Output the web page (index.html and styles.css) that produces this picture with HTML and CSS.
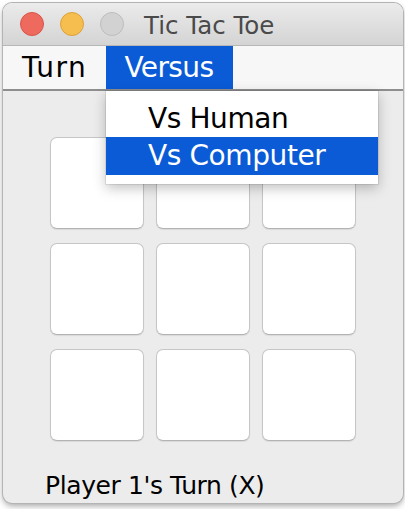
FILE: index.html
```html
<!DOCTYPE html>
<html>
<head>
<meta charset="utf-8">
<link rel="stylesheet" href="styles.css">
</head>
<body>
<div class="backdrop">
  <div class="window">
    <div class="titlebar">
      <div class="lights">
        <span class="light red"></span>
        <span class="light yellow"></span>
        <span class="light gray"></span>
      </div>
      <div class="title">Tic Tac Toe</div>
    </div>
    <div class="menubar">
      <div class="menu-item turn">Turn</div>
      <div class="menu-item active">Versus</div>
    </div>
    <div class="content">
      <div class="board">
        <button class="cell"></button>
        <button class="cell"></button>
        <button class="cell"></button>
        <button class="cell"></button>
        <button class="cell"></button>
        <button class="cell"></button>
        <button class="cell"></button>
        <button class="cell"></button>
        <button class="cell"></button>
      </div>
      <div class="status">Player 1's Turn (X)</div>
    </div>
    <div class="dropdown">
      <div class="drop-item">Vs Human</div>
      <div class="drop-item selected">Vs Computer</div>
    </div>
  </div>
</div>
</body>
</html>
```
FILE: styles.css
```css
html, body {
  margin: 0;
  padding: 0;
}
body {
  width: 405px;
  height: 509px;
  overflow: hidden;
  background: #ffffff;
  font-family: "DejaVu Sans", sans-serif;
}
.backdrop {
  padding: 3px 0 0 3px;
}
.window {
  position: relative;
  width: 400px;
  height: 500px;
  border-radius: 9px;
  background: #ececec;
  box-shadow: 0 0 0 1px #b4b4b4, 0 3px 6px rgba(0,0,0,0.35);
  display: flex;
  flex-direction: column;
}
.titlebar {
  height: 42px;
  border-radius: 9px 9px 0 0;
  background: linear-gradient(#ebebeb, #d4d4d4);
  border-bottom: 1px solid #b6b6b6;
  display: flex;
  align-items: center;
}
.lights {
  display: flex;
  gap: 16px;
  padding-left: 17px;
}
.light {
  box-sizing: border-box;
  width: 24px;
  height: 24px;
  border-radius: 50%;
  display: block;
}
.red { background: #ef6a5e; border: 1px solid #d9534a; }
.yellow { background: #f6be4f; border: 1px solid #dca13a; }
.gray { background: #d2d2d2; border: 1px solid #bdbdbd; }
.title {
  flex: 1;
  padding: 3px 0 0 20px;
  font-size: 24.5px;
  color: #4a4a4a;
  line-height: 39px;
}
.menubar {
  height: 43px;
  background: #f7f7f7;
  border-bottom: 2px solid #8e8e8e;
  display: flex;
  padding-left: 1px;
}
.menu-item {
  font-size: 28px;
  line-height: 44px;
  color: #000;
}
.menu-item.turn {
  padding: 0 19px 0 18px;
  letter-spacing: 1.5px;
}
.menu-item.active {
  background: #0b5bd7;
  color: #fff;
  padding: 0 20px 0 18px;
  letter-spacing: -0.6px;
}
.content {
  flex: 1;
  padding: 46px 0 0 47px;
  display: flex;
  flex-direction: column;
}
.board {
  display: grid;
  grid-template-columns: repeat(3, 94px);
  grid-template-rows: repeat(3, 92px);
  column-gap: 12px;
  row-gap: 14px;
}
.cell {
  margin: 0;
  padding: 0;
  background: #ffffff;
  border: 1px solid #c6c6c6;
  border-bottom-color: #b3b3b3;
  border-radius: 7px;
  box-shadow: 0 1px 1px rgba(0,0,0,0.08);
}
.status {
  margin-top: 30px;
  margin-left: -5px;
  font-size: 25px;
  letter-spacing: -0.4px;
  line-height: 30px;
  color: #000;
}
.dropdown {
  position: absolute;
  left: 103px;
  top: 88px;
  width: 272px;
  padding: 8px 0 9px 0;
  background: #ffffff;
  box-shadow: 0 4px 12px rgba(0,0,0,0.25), 0 0 0 1px rgba(0,0,0,0.08);
}
.drop-item {
  height: 38px;
  line-height: 39px;
  padding-left: 42px;
  font-size: 28px;
  letter-spacing: -0.4px;
  color: #000;
}
.drop-item.selected {
  background: #0b5bd7;
  color: #fff;
  height: 38px;
  line-height: 37px;
}
```
